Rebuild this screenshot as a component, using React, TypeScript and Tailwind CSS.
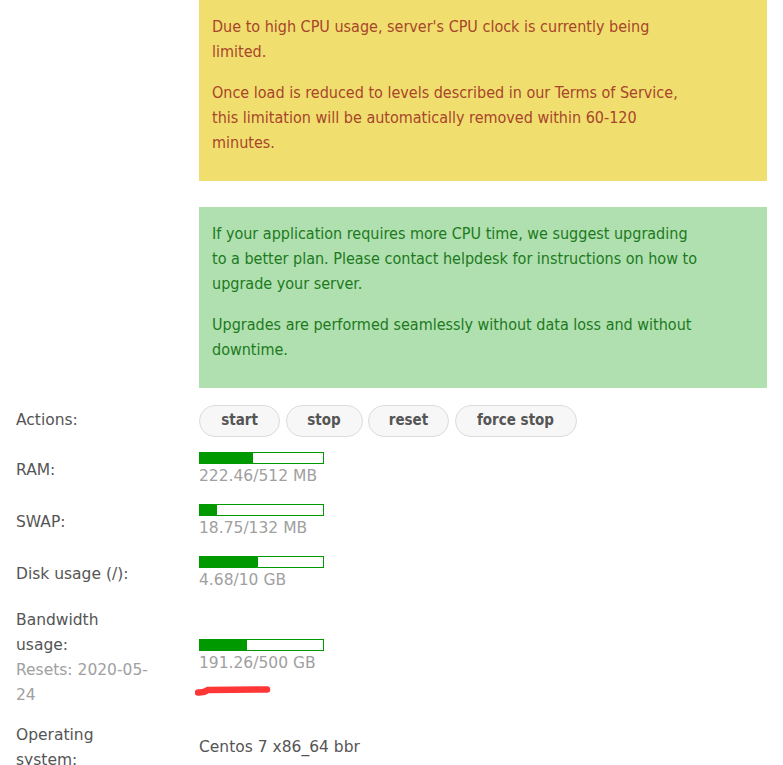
import React from "react";

const bars = [
  { label: "RAM:", used: 222.46, total: 512, unit: "MB" },
  { label: "SWAP:", used: 18.75, total: 132, unit: "MB" },
  { label: "Disk usage (/):", used: 4.68, total: 10, unit: "GB" },
];

function Bar({ used, total, unit, mark }: { used: number; total: number; unit: string; mark?: boolean }) {
  return (
    <div className="relative flex flex-col">
      <div className="w-[125px] h-[12px] border border-[#009900] bg-white">
        <div className="h-full bg-[#009900]" style={{ width: `${(used / total) * 100}%` }} />
      </div>
      <div className="text-[#a0a0a0]">
        {used}/{total} {unit}
      </div>
      {mark && (
        <svg className="absolute left-[-4px] top-[44px]" width="84" height="14" viewBox="0 0 84 14">
          <path d="M3 9.5 C8 10 10 9 13 7 L72 6.5" stroke="#ff3636" strokeWidth="6.5" strokeLinecap="round" fill="none" />
        </svg>
      )}
    </div>
  );
}

function Row({ label, children }: { label: React.ReactNode; children: React.ReactNode }) {
  return (
    <div className="flex items-center py-[7.5px]">
      <div className="w-[199px] shrink-0 pl-[16px] pr-[47px] text-[#555]">{label}</div>
      <div className="flex-1">{children}</div>
    </div>
  );
}

export default function App() {
  const btn =
    "h-[32px] rounded-full border border-[#dcdcdc] bg-[#f7f7f7] font-bold text-[#555] text-[15px] flex items-center justify-center font-['DejaVu_Sans_Condensed','DejaVu_Sans',sans-serif]";
  return (
    <div className="w-[783px] h-[765px] overflow-hidden bg-white text-[16px] leading-[25px] font-['DejaVu_Sans_Condensed','DejaVu_Sans',sans-serif]">
      <div className="ml-[199px] w-[568px]">
        <div className="bg-[#f0df6f] text-[#a8452a] pt-[14px] pb-[26px] pl-[13px] pr-[65px] flex flex-col gap-[16px]">
          <p>Due to high CPU usage, server's CPU clock is currently being limited.</p>
          <p>
            Once load is reduced to levels described in our Terms of Service, this limitation will be automatically
            removed within 60-120 minutes.
          </p>
        </div>
        <div className="mt-[26px] bg-[#b0dfb0] text-[#1c7a1c] pt-[14px] pb-[26px] pl-[13px] pr-[65px] flex flex-col gap-[16px]">
          <p>
            If your application requires more CPU time, we suggest upgrading to a better plan. Please contact helpdesk
            for instructions on how to upgrade your server.
          </p>
          <p>Upgrades are performed seamlessly without data loss and without downtime.</p>
        </div>
      </div>
      <div className="mt-[9px] text-[15.5px] font-['DejaVu_Sans',sans-serif]">
        <Row label="Actions:">
          <div className="flex gap-[5.5px]">
            <button className={`${btn} w-[81px]`}>start</button>
            <button className={`${btn} w-[77px]`}>stop</button>
            <button className={`${btn} w-[81px]`}>reset</button>
            <button className={`${btn} w-[122px]`}>force stop</button>
          </div>
        </Row>
        {bars.map((b) => (
          <Row key={b.label} label={b.label}>
            <Bar used={b.used} total={b.total} unit={b.unit} />
          </Row>
        ))}
        <Row
          label={
            <div>
              Bandwidth usage:
              <div className="text-[#a0a0a0]">Resets: 2020-05-24</div>
            </div>
          }
        >
          <Bar used={191.26} total={500} unit="GB" mark />
        </Row>
        <Row label="Operating system:">
          <div className="text-[#555]">Centos 7 x86_64 bbr</div>
        </Row>
      </div>
    </div>
  );
}
